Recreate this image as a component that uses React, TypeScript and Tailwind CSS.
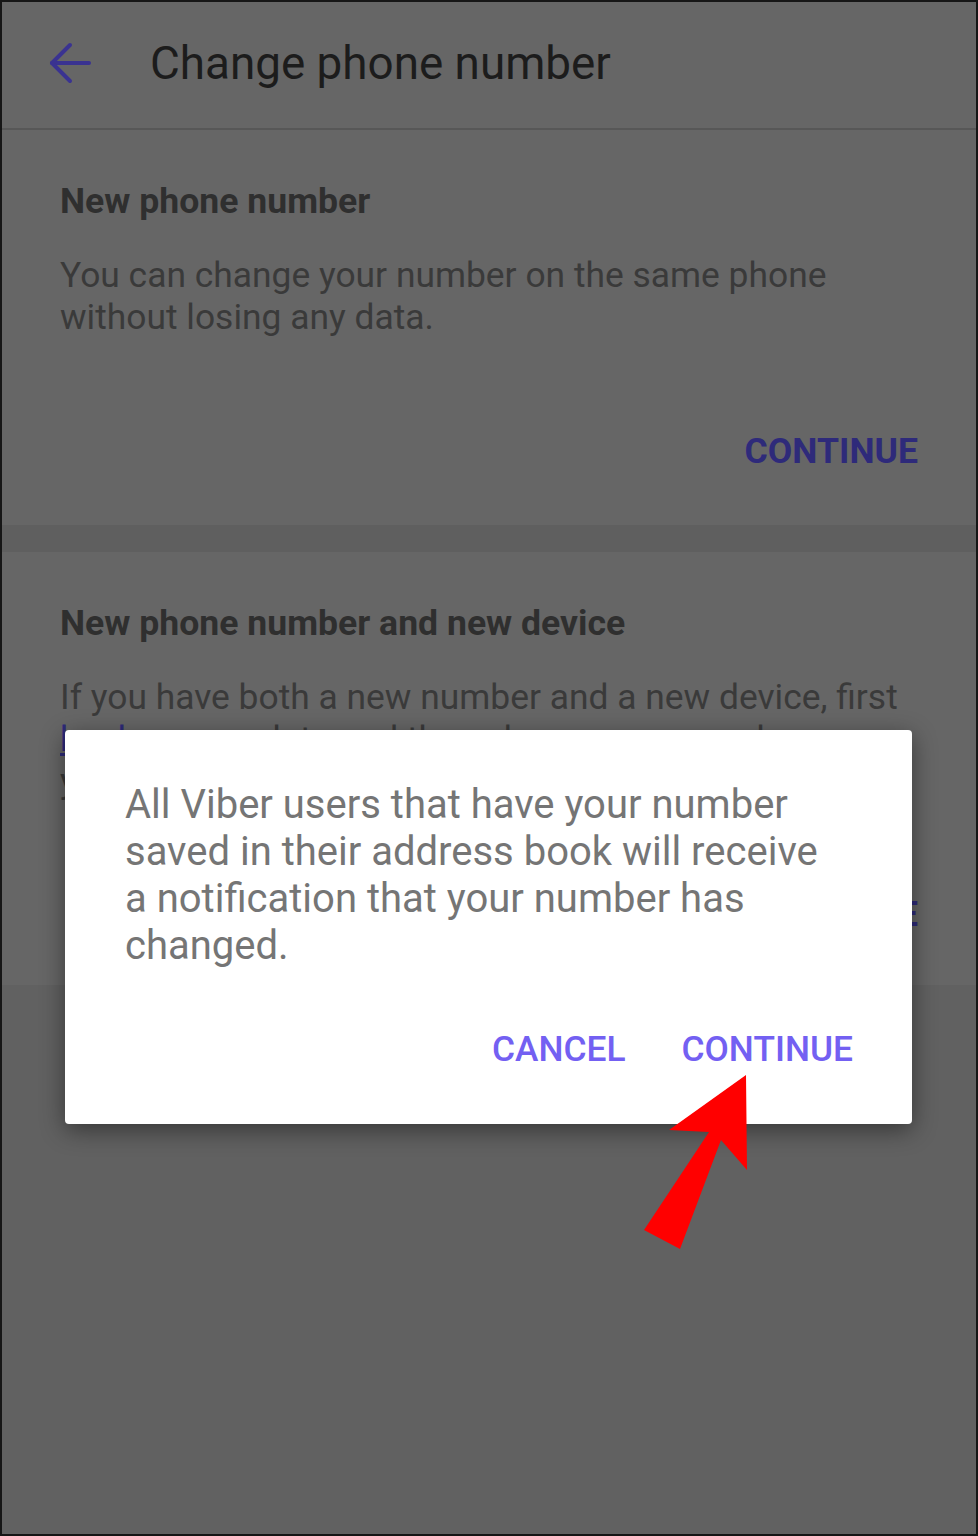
import { useState } from 'react';

const font = { fontFamily: 'Roboto, "Noto Sans", sans-serif' };

function BackArrow() {
    return (
        <svg width="42" height="42" viewBox="0 0 42 42" fill="none">
            <path d="M3 21H40" stroke="#3a3391" strokeWidth="4" strokeLinecap="round" />
            <path d="M21 3L3 21L21 39" stroke="#3a3391" strokeWidth="4" strokeLinecap="round" strokeLinejoin="round" />
        </svg>
    );
}

export default function App() {
    const [open, setOpen] = useState(true);

    return (
        <div className="relative w-[978px] h-[1536px] overflow-hidden border-2 border-[#161616] bg-[#616161] flex flex-col" style={font}>
            {/* Top bar */}
            <div className="h-[128px] shrink-0 flex items-center bg-[#666666] border-b-2 border-[#575757]">
                <div className="ml-[47px] mb-[4px]">
                    <BackArrow />
                </div>
                <h1 className="ml-[59px] mb-[2px] text-[45.8px] leading-[52px] text-[#1c1c1c]">Change phone number</h1>
            </div>

            {/* New phone number */}
            <section className="bg-[#666666] px-[58px] pt-[51px] pb-[53px]">
                <h2 className="text-[35.6px] leading-[40px] font-bold text-[#2f2f2f]">New phone number</h2>
                <p className="mt-[33px] text-[35.4px] leading-[42px] text-[#3a3a3a]">
                    You can change your number on the same phone without losing any data.
                </p>
                <div className="mt-[92px] flex justify-end">
                    <button className="text-[35.6px] leading-[42px] font-bold text-[#2e2a7a]">CONTINUE</button>
                </div>
            </section>

            <div className="h-[27px] shrink-0 bg-[#5f5f5f]" />

            {/* New phone number and new device */}
            <section className="bg-[#666666] px-[58px] pt-[51px] pb-[50px]">
                <h2 className="text-[35.6px] leading-[40px] font-bold text-[#2f2f2f]">New phone number and new device</h2>
                <p className="mt-[33px] text-[35.4px] leading-[42px] text-[#3a3a3a]">
                    If you have both a new number and a new device, first{' '}
                    <span className="underline text-[#2e2a7a]">backup</span> your data and then change your number on
                    your current phone.
                </p>
                <div className="mt-[91px] flex justify-end">
                    <button className="text-[35.6px] leading-[42px] font-bold text-[#2e2a7a]">CONTINUE</button>
                </div>
            </section>

            <div className="flex-1 bg-[#616161]" />

            {/* Dialog */}
            {open && (
                <div className="absolute left-[63px] top-[728px] w-[847px] h-[394px] bg-white rounded-[4px] shadow-[0_6px_24px_rgba(0,0,0,0.45)] flex flex-col">
                    <p className="pl-[60px] pr-[82px] pt-[51px] text-[40px] leading-[47px] text-[#757575]">
                        All Viber users that have your number saved in their address book will receive a notification that your number has changed.
                    </p>
                    <div className="mt-auto mb-[54px] mr-[59px] flex justify-end gap-[56px]">
                        <button onClick={() => setOpen(false)} className="text-[35.3px] leading-[42px] font-medium text-[#7360f2]">CANCEL</button>
                        <button onClick={() => setOpen(false)} className="text-[35.3px] leading-[42px] font-medium text-[#7360f2]">CONTINUE</button>
                    </div>
                </div>
            )}

            {/* Red pointer arrow */}
            <svg className="absolute left-0 top-0 pointer-events-none" width="978" height="1536">
                <polygon points="744,1073 667,1128 707,1130 642,1228 678,1247 719,1138 745,1168" fill="#ff0000" />
            </svg>
        </div>
    );
}
